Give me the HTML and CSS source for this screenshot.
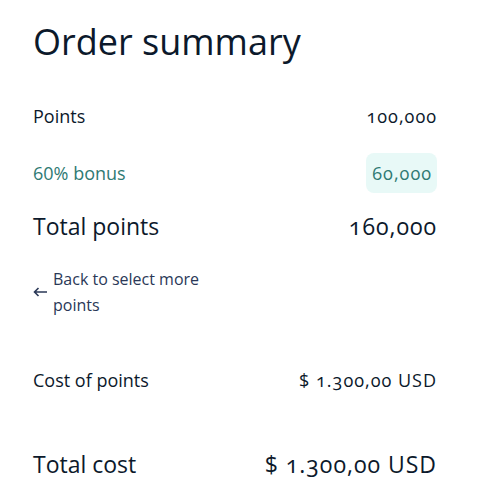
FILE: index.html
```html
<!DOCTYPE html>
<html lang="en">
<head>
  <meta charset="UTF-8" />
  <meta name="viewport" content="width=device-width, initial-scale=1.0" />
  <title>Order summary</title>
  <link rel="stylesheet" href="styles.css">
</head>
<body>

  <div class="summary">
    <h1>Order summary</h1>

    <div class="row">
      <span>Points</span>
      <span class="num">100,000</span>
    </div>

    <div class="row bonus">
      <span>60% bonus</span>
      <span class="num badge">60,000</span>
    </div>

    <div class="row total">
      <span>Total points</span>
      <span class="num">160,000</span>
    </div>

    <a class="back" href="#">
      <svg class="arrow" width="14" height="10" viewBox="0 0 14 10" fill="none" stroke="currentColor" stroke-width="1.6">
        <path d="M14 5H1.5M5.5 1L1.5 5l4 4"/>
      </svg>
      <span class="back-text">Back to select more points</span>
    </a>

    <div class="row cost">
      <span>Cost of points</span>
      <span class="num">$ 1.300,00 USD</span>
    </div>

    <div class="row total grand">
      <span>Total cost</span>
      <span class="num">$ 1.300,00 USD</span>
    </div>
  </div>

</body>
</html>
```

FILE: styles.css
```css
body {
  margin: 0;
  background: #fff;
  color: #0c192b;
  font-family: "Open Sans", "Noto Sans", sans-serif;
}
.summary {
  padding: 20px 43px 0 33px;
}
h1 {
  font-size: 36px;
  font-weight: 400;
  line-height: 44px;
  margin: 0 0 32px;
}
.row {
  display: flex;
  justify-content: space-between;
  align-items: center;
  height: 40px;
  font-size: 18px;
  margin-bottom: 17px;
}
.num {
  font-variant-numeric: oldstyle-nums;
  font-feature-settings: "onum";
  letter-spacing: 1px;
}
.bonus {
  color: #2f7a73;
}
.badge {
  background: #e8f9f7;
  border-radius: 8px;
  padding: 0 5px 0 6px;
  line-height: 40px;
}
.total {
  height: 32px;
  font-size: 23px;
  margin-bottom: 24px;
}
.total .num {
  letter-spacing: 1px;
}
.back {
  display: flex;
  align-items: center;
  gap: 6px;
  color: #2a3857;
  text-decoration: none;
  font-size: 16px;
  line-height: 26px;
  margin-bottom: 42px;
}
.back-text {
  width: 160px;
}
.arrow {
  flex: none;
}
.cost {
  margin-bottom: 48px;
}
.grand {
  margin-bottom: 0;
}
```
